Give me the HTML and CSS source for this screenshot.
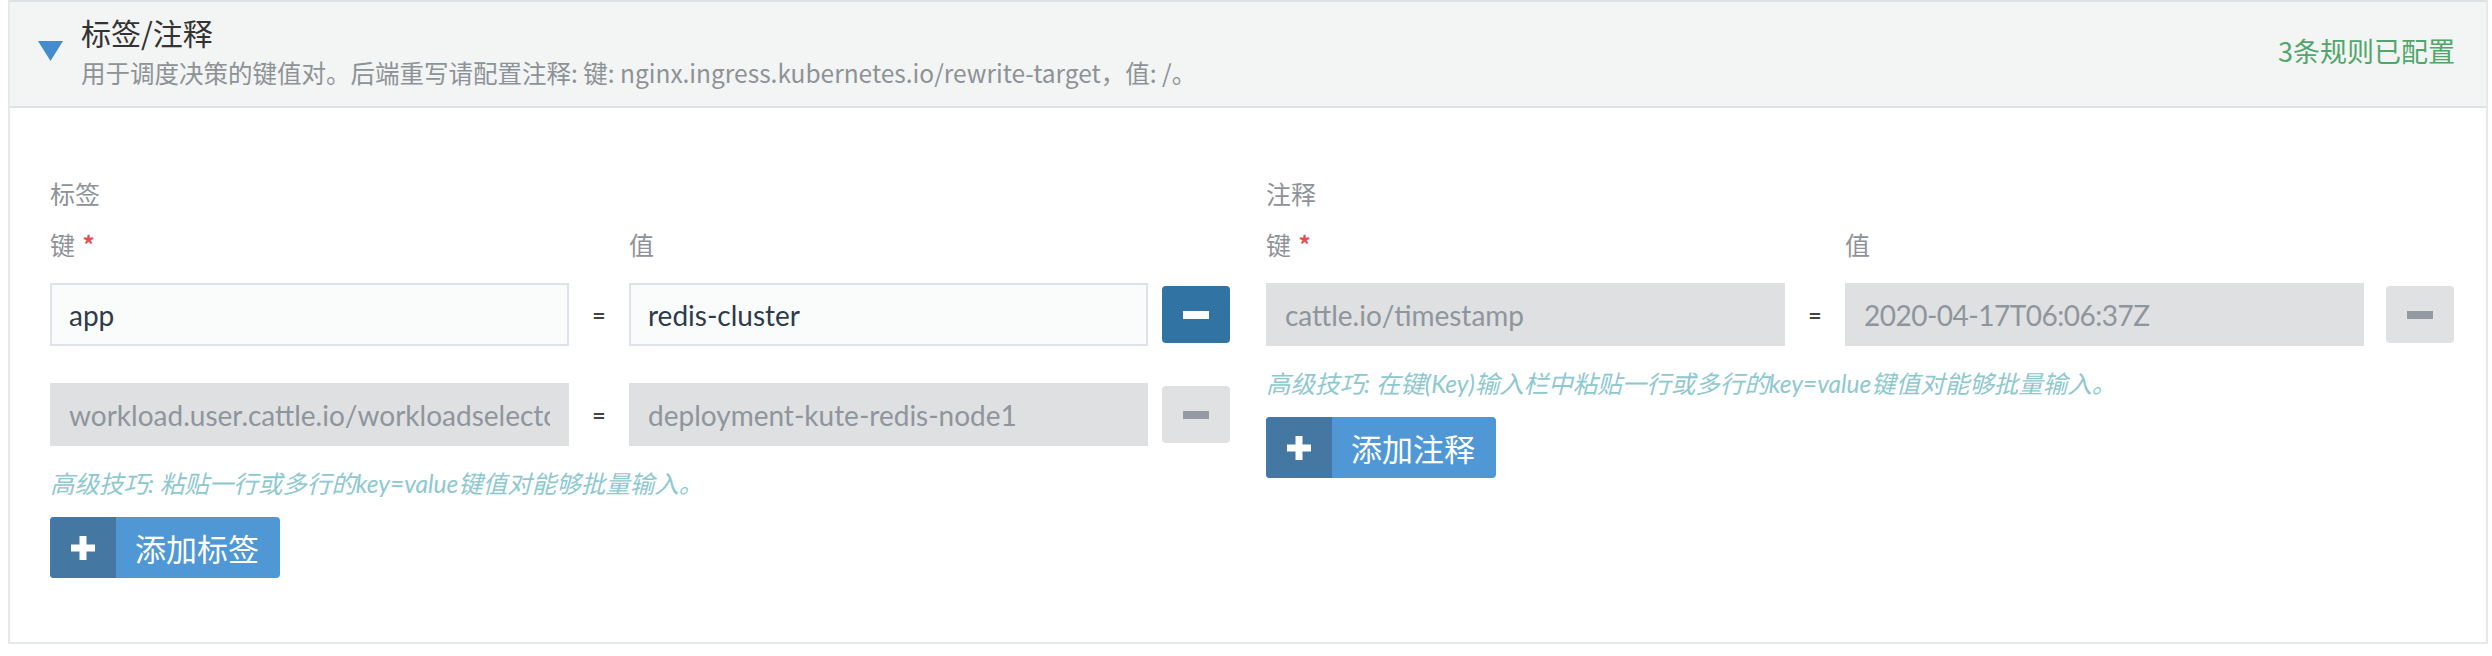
FILE: index.html
```html
<!DOCTYPE html>
<html lang="zh-CN">
  <head>
    <meta charset="UTF-8" />
    <meta name="viewport" content="width=device-width, initial-scale=1.0" />
    <title>标签/注释</title>
    <link rel="stylesheet" href="styles.css">
  </head>
  <body>
    <div class="accordion">
      <div class="accordion-header">
        <svg class="caret" width="25" height="20" viewBox="0 0 25 20">
          <polygon points="0,0 25,0 12.5,20" />
        </svg>
        <div class="header-text">
          <h3 class="header-title">标签/注释</h3>
          <p class="header-desc">用于调度决策的键值对。后端重写请配置注释: 键: nginx.ingress.kubernetes.io/rewrite-target，值: /。</p>
        </div>
        <span class="header-status">3条规则已配置</span>
      </div>

      <div class="accordion-body">
        <!-- labels -->
        <div class="kv-section">
          <div class="section-label">标签</div>
          <div class="kv-row kv-head">
            <label>键 <span class="required">*</span></label>
            <span></span>
            <label>值</label>
          </div>
          <div class="kv-row">
            <input class="kv-input" type="text" value="app" />
            <span class="kv-eq">=</span>
            <input class="kv-input" type="text" value="redis-cluster" />
            <button class="btn-remove"><span class="minus"></span></button>
          </div>
          <div class="kv-row">
            <input class="kv-input" type="text" value="workload.user.cattle.io/workloadselector" disabled />
            <span class="kv-eq">=</span>
            <input class="kv-input" type="text" value="deployment-kute-redis-node1" disabled />
            <button class="btn-remove" disabled><span class="minus"></span></button>
          </div>
          <p class="kv-hint">高级技巧: 粘贴一行或多行的key=value键值对能够批量输入。</p>
          <button class="btn-add">
            <span class="btn-add-icon">
              <svg width="24" height="24" viewBox="0 0 24 24"><path d="M8.5 0h7v8.5H24v7h-8.5V24h-7v-8.5H0v-7h8.5z" /></svg>
            </span>
            <span class="btn-add-label">添加标签</span>
          </button>
        </div>

        <!-- annotations -->
        <div class="kv-section">
          <div class="section-label">注释</div>
          <div class="kv-row kv-head">
            <label>键 <span class="required">*</span></label>
            <span></span>
            <label>值</label>
          </div>
          <div class="kv-row">
            <input class="kv-input" type="text" value="cattle.io/timestamp" disabled />
            <span class="kv-eq">=</span>
            <input class="kv-input kv-input-num" type="text" value="2020-04-17T06:06:37Z" disabled />
            <button class="btn-remove" disabled><span class="minus"></span></button>
          </div>
          <p class="kv-hint">高级技巧: 在键(Key)输入栏中粘贴一行或多行的key=value键值对能够批量输入。</p>
          <button class="btn-add">
            <span class="btn-add-icon">
              <svg width="24" height="24" viewBox="0 0 24 24"><path d="M8.5 0h7v8.5H24v7h-8.5V24h-7v-8.5H0v-7h8.5z" /></svg>
            </span>
            <span class="btn-add-label">添加注释</span>
          </button>
        </div>
      </div>
    </div>
  </body>
</html>
```

FILE: styles.css
```css
:root {
  --clr-border: #e6e9ea;
  --clr-label: #8e9399;
  --clr-blue: #5098d5;
  --clr-blue-dark: #4577a3;
  --clr-disabled: #dfe0e2;
}

* {
  margin: 0;
  padding: 0;
  box-sizing: border-box;
}

body {
  font-family: "Noto Sans CJK SC", sans-serif;
  background-color: #fff;
}

.accordion {
  margin-left: 8px;
  width: 2480px;
  border: 2px solid var(--clr-border);
  border-top-color: #dde2e5;
}

.accordion-header {
  display: flex;
  align-items: center;
  padding: 12px 31px 19px 28px;
  background-color: #f3f4f4;
  border-bottom: 2px solid #dfe3e6;
}

.caret {
  fill: #448ccc;
  margin-right: 18px;
  flex-shrink: 0;
}

.header-text {
  flex: 1;
}

.header-title {
  font-size: 30px;
  line-height: 36px;
  font-weight: 400;
  color: #333;
}

.header-desc {
  margin-top: 9px;
  font-size: 24.5px;
  line-height: 28px;
  color: #8d9296;
}

.header-status {
  font-size: 27px;
  color: #52a66c;
}

.accordion-body {
  display: grid;
  grid-template-columns: 1180px 1188px;
  column-gap: 36px;
  padding: 70px 32px 64px 40px;
  align-items: start;
}

.section-label {
  font-size: 25px;
  line-height: 30px;
  color: var(--clr-label);
  margin-bottom: 21px;
}

.kv-row {
  display: grid;
  grid-template-columns: 519px 60px 519px 1fr;
  align-items: center;
}

.kv-row + .kv-row {
  margin-top: 37px;
}

.kv-head {
  font-size: 25px;
  line-height: 30px;
  color: var(--clr-label);
  margin-bottom: 24px;
}

.kv-head + .kv-row {
  margin-top: 0;
}

.required {
  color: #e0524f;
  font-size: 24px;
  font-weight: bold;
  vertical-align: top;
  margin-left: 2px;
}

.kv-input {
  height: 63px;
  width: 100%;
  padding: 0 17px;
  border: 2px solid #dde3e8;
  background-color: #fafbfb;
  font-family: "Lato", "Noto Sans CJK SC", sans-serif;
  font-size: 28px;
  color: #2e3b4c;
  outline: none;
}

.kv-input-num {
  letter-spacing: -0.5px;
}

.kv-input:disabled {
  background-color: var(--clr-disabled);
  border-color: var(--clr-disabled);
  color: #8e959c;
}

.kv-eq {
  text-align: center;
  font-family: "Lato", sans-serif;
  font-size: 23px;
  font-weight: bold;
  color: #444;
}

.btn-remove {
  justify-self: end;
  width: 68px;
  height: 57px;
  border: none;
  border-radius: 4px;
  background-color: #3173a3;
  display: flex;
  align-items: center;
  justify-content: center;
}

.btn-remove .minus {
  display: block;
  width: 26px;
  height: 8px;
  background-color: #fff;
}

.btn-remove:disabled {
  background-color: #e0e1e3;
}

.btn-remove:disabled .minus {
  background-color: #939aa1;
}

.kv-hint {
  margin-top: 23px;
  font-family: "Lato", "Noto Sans CJK SC", sans-serif;
  font-size: 24.5px;
  line-height: 30px;
  font-style: italic;
  color: #8ec8cf;
}

.btn-add {
  margin-top: 18px;
  display: inline-flex;
  height: 61px;
  border: none;
  border-radius: 4px;
  overflow: hidden;
  background-color: var(--clr-blue);
  color: #fff;
  font-family: "Noto Sans CJK SC", sans-serif;
  font-size: 31px;
}

.btn-add-icon {
  width: 66px;
  background-color: var(--clr-blue-dark);
  display: flex;
  align-items: center;
  justify-content: center;
}

.btn-add-icon svg {
  fill: #fff;
}

.btn-add-label {
  display: flex;
  align-items: center;
  padding: 0 21px 0 19px;
}
```
